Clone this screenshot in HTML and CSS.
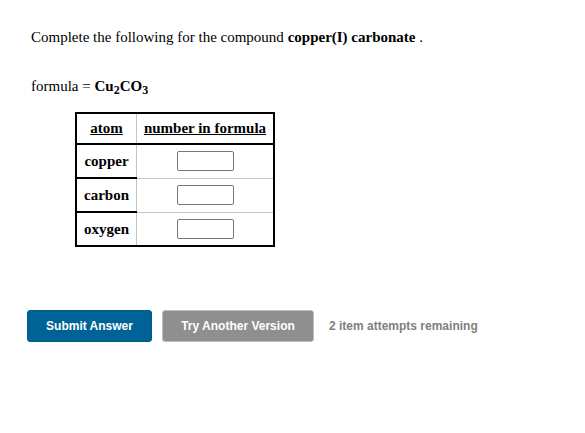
FILE: index.html
```html
<!DOCTYPE html>
<html>
<head>
<meta charset="utf-8">
<link rel="stylesheet" href="styles.css">
</head>
<body>
<div class="page">
  <p class="prompt">Complete the following for the compound <b>copper(I) carbonate</b> .</p>
  <p class="formula">formula = <b>Cu<sub>2</sub>CO<sub>3</sub></b></p>
  <table class="atoms">
    <thead>
      <tr><th class="c1"><u>atom</u></th><th class="c2"><u>number in formula</u></th></tr>
    </thead>
    <tbody>
      <tr><td class="c1">copper</td><td class="c2"><input class="box" type="text"></td></tr>
      <tr><td class="c1">carbon</td><td class="c2"><input class="box" type="text"></td></tr>
      <tr><td class="c1">oxygen</td><td class="c2"><input class="box" type="text"></td></tr>
    </tbody>
  </table>
  <div class="actions">
    <button class="btn submit">Submit Answer</button>
    <button class="btn another">Try Another Version</button>
    <span class="remaining">2 item attempts remaining</span>
  </div>
</div>
</body>
</html>
```
FILE: styles.css
```css
html, body {
  margin: 0;
  padding: 0;
  background: #fff;
}
.page {
  padding: 29px 0 0 31px;
  font-family: "Liberation Serif", "Times New Roman", serif;
  font-size: 15px;
  color: #000;
}
.prompt {
  margin: 0;
  line-height: 17px;
}
.formula {
  margin: 32px 0 0 0;
  line-height: 17px;
}
.formula sub {
  font-size: 12px;
  line-height: 0;
  vertical-align: -3px;
}
.atoms {
  margin: 17px 0 0 44px;
  border-collapse: collapse;
  border: 2px solid #000;
}
.atoms th {
  height: 29px;
  padding: 0;
  font-weight: bold;
  border-bottom: 2px solid #000;
  text-align: center;
}
.atoms td {
  height: 32px;
  padding: 0;
  font-weight: bold;
  text-align: center;
}
.atoms .c1 {
  width: 59px;
  border-right: 1px solid #c4c4c4;
}
.atoms .c2 {
  width: 136px;
}
.atoms td.c1 {
  border-bottom: 2px solid #000;
}
.atoms td.c2 {
  border-bottom: 1px solid #c4c4c4;
}
.box {
  display: block;
  margin: 0 auto;
  box-sizing: border-box;
  width: 57px;
  height: 20px;
  border: 1px solid #777;
  border-radius: 2px;
  padding: 0;
  background: #fff;
}
.actions {
  margin-top: 63px;
  margin-left: -4px;
  display: flex;
  align-items: center;
  gap: 10px;
  font-family: "Liberation Sans", Arial, sans-serif;
}
.btn {
  height: 32px;
  border-radius: 3px;
  font-family: "Liberation Sans", Arial, sans-serif;
  font-size: 12px;
  font-weight: bold;
  color: #fff;
  padding: 0;
  cursor: pointer;
}
.submit {
  width: 125px;
  background: #006398;
  border: 1px solid #005a8a;
}
.another {
  width: 152px;
  background: #8f8f8f;
  border: 1px solid #bdbdbd;
}
.remaining {
  margin-left: 5px;
  font-size: 12px;
  font-weight: bold;
  color: #808080;
}
```
